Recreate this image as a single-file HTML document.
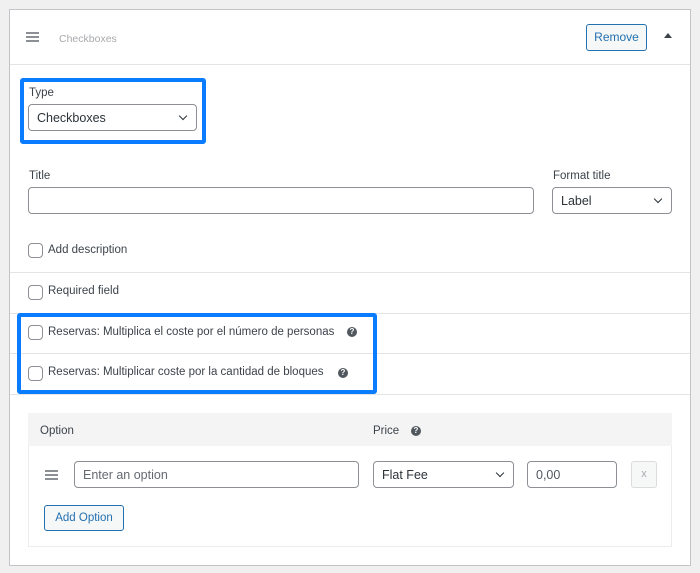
<!DOCTYPE html>
<html><head><meta charset="utf-8"><style>
*{box-sizing:border-box;margin:0;padding:0}
body{width:700px;height:573px;background:#f0f0f1;font-family:"Liberation Sans",sans-serif;font-size:11.5px;color:#3c434a;position:relative;overflow:hidden}
.a{position:absolute}
.t{margin-top:2px}
.panel{left:9px;top:9px;width:682px;height:557px;background:#fff;border:1px solid #c3c4c7}
.hr{height:1px;background:#e4e4e6;left:10px;width:680px}
.inp{border:1px solid #8c8f94;border-radius:4px;background:#fff}
.sel{border:1px solid #8c8f94;border-radius:4px;background:#fff;color:#2c3338;font-size:12.5px;padding-left:8px;line-height:26px}
.chev{position:absolute;right:10px;top:8px;width:6px;height:6px;border-right:1.5px solid #2c3338;border-bottom:1.5px solid #2c3338;transform:rotate(45deg)}
.cb{width:15px;height:15px;border:1px solid #8c8f94;border-radius:4px;background:#fff}
.q{width:10px;height:10px;border-radius:50%;background:#50575e;color:#fff;font-size:8px;font-weight:bold;text-align:center;line-height:10px}
.blue{border:4px solid #0a7cff;border-radius:3px}
.ham{width:13px}
.ham i{display:block;height:2px;background:#8c8f94;margin-bottom:2px}
</style></head><body>
<div class="a panel"></div>
<div class="a ham" style="left:26px;top:32px"><i></i><i></i><i></i></div>
<div class="a" style="left:59px;top:33px;color:#a7aaad;font-size:10.5px">Checkboxes</div>
<div class="a" style="left:586px;top:24px;width:61px;height:27px;border:1px solid #2271b1;border-radius:3px;background:#f6f7f7;color:#2271b1;font-size:12px;text-align:center;line-height:25px">Remove</div>
<div class="a" style="left:664px;top:33px;width:0;height:0;border-left:4px solid transparent;border-right:4px solid transparent;border-bottom:5px solid #3c434a"></div>
<div class="a hr" style="top:64px"></div>

<div class="a blue" style="left:20px;top:78px;width:186px;height:66px"></div>
<div class="a" style="left:29px;top:87px">Type</div>
<div class="a sel" style="left:28px;top:104px;width:169px;height:27px">Checkboxes<span class="chev"></span></div>

<div class="a" style="left:29px;top:170px">Title</div>
<div class="a inp" style="left:28px;top:187px;width:506px;height:27px"></div>
<div class="a" style="left:553px;top:170px">Format title</div>
<div class="a sel" style="left:552px;top:187px;width:120px;height:27px">Label<span class="chev"></span></div>

<div class="a cb" style="left:28px;top:243px"></div>
<div class="a" style="left:48px;top:244px">Add description</div>
<div class="a hr" style="top:272px"></div>
<div class="a cb" style="left:28px;top:285px"></div>
<div class="a" style="left:48px;top:285px">Required field</div>
<div class="a hr" style="top:313px"></div>
<div class="a cb" style="left:28px;top:325px"></div>
<div class="a" style="left:48px;top:326px">Reservas: Multiplica el coste por el número de personas</div>
<div class="a q" style="left:347px;top:327px">?</div>
<div class="a hr" style="top:353px"></div>
<div class="a cb" style="left:28px;top:366px"></div>
<div class="a" style="left:48px;top:366px">Reservas: Multiplicar coste por la cantidad de bloques</div>
<div class="a q" style="left:338px;top:368px">?</div>
<div class="a hr" style="top:394px"></div>
<div class="a blue" style="left:17px;top:313px;width:360px;height:81px"></div>

<div class="a" style="left:28px;top:413px;width:644px;height:134px;border:1px solid #ececec;background:#fff"></div>
<div class="a" style="left:28px;top:413px;width:644px;height:33px;background:#f4f4f4"></div>
<div class="a" style="left:40px;top:425px">Option</div>
<div class="a" style="left:373px;top:425px">Price</div>
<div class="a q" style="left:411px;top:426px">?</div>
<div class="a ham" style="left:45px;top:470px"><i></i><i></i><i></i></div>
<div class="a inp" style="left:74px;top:461px;width:285px;height:27px;color:#646970;font-size:12.5px;padding-left:8px;line-height:26px">Enter an option</div>
<div class="a sel" style="left:373px;top:461px;width:141px;height:27px">Flat Fee<span class="chev"></span></div>
<div class="a inp" style="left:527px;top:461px;width:90px;height:27px;color:#50575e;font-size:12.5px;padding-left:8px;line-height:26px">0,00</div>
<div class="a" style="left:631px;top:461px;width:26px;height:27px;border:1px solid #dcdcde;border-radius:3px;background:#f6f7f7;color:#a7aaad;text-align:center;line-height:25px;font-size:11px">x</div>
<div class="a" style="left:44px;top:505px;width:80px;height:26px;border:1px solid #2271b1;border-radius:3px;background:#f6f7f7;color:#2271b1;text-align:center;line-height:25px">Add Option</div>
</body></html>
